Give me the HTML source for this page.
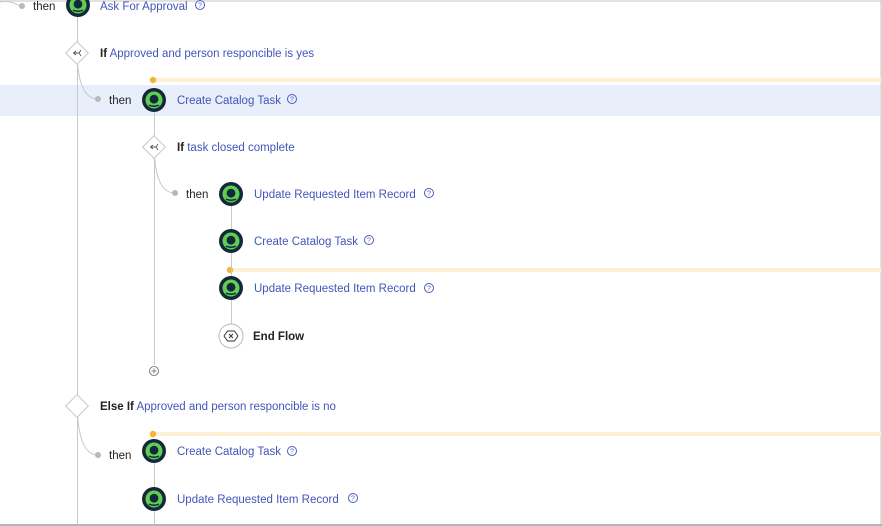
<!DOCTYPE html>
<html><head><meta charset="utf-8"><style>
html,body{margin:0;padding:0;background:#fff;}
svg{display:block;font-family:"Liberation Sans",sans-serif;}
.l{fill:#4355b9;font-size:11.5px;}
.t{fill:#222;font-size:11.5px;}
.b{fill:#222;font-size:11.5px;font-weight:bold;}
.q{fill:none;stroke:#4a5cc0;stroke-width:1;}
</style></head><body>
<svg width="882" height="526" viewBox="0 0 882 526">
<defs>
<g id="ic">
<circle r="12" fill="#13283a"/>
<circle r="8.5" fill="#5fce52"/>
<circle cy="-0.8" r="4.4" fill="#13283a"/>
<path d="M-5 5.2 Q0 7.2 5 5.2" stroke="#13283a" stroke-width="1.5" fill="none"/>
</g>
<g id="qm"><circle r="4.5" class="q"/><text x="0" y="2.6" text-anchor="middle" font-size="7" fill="#4a5cc0">?</text></g>
<g id="dm"><rect x="-8" y="-8" width="16" height="16" transform="rotate(45)" fill="#fff" stroke="#c8c8c8"/></g>
<g id="br"><path d="M-3.5 0 H2 M2 0 L4 -3 M2 0 L4 3 M-1 -2 L-3.5 0 L-1 2" stroke="#555" fill="none" stroke-width="0.9"/></g>
</defs>
<rect x="0" y="0.5" width="881" height="1" fill="#c6c6c6"/>
<rect x="880.5" y="0" width="1.2" height="526" fill="#c6c6c6"/>
<rect x="0" y="524" width="882" height="2" fill="#b5b5b5"/>
<rect x="0" y="85" width="880" height="31" fill="#e9eefb"/>
<rect x="153" y="78" width="728" height="4" fill="#fdf0d4"/>
<circle cx="153" cy="80" r="3.2" fill="#f5b72f"/>
<rect x="230" y="268" width="651" height="4" fill="#fdf0d4"/>
<circle cx="230" cy="270" r="3.2" fill="#f5b72f"/>
<rect x="153" y="432" width="728" height="4" fill="#fdf0d4"/>
<circle cx="153" cy="434" r="3.2" fill="#f5b72f"/>
<g stroke="#c8c8c8" stroke-width="1" fill="none">
<line x1="77.5" y1="0" x2="77.5" y2="524"/>
<line x1="154.5" y1="100" x2="154.5" y2="365"/>
<line x1="231.5" y1="194" x2="231.5" y2="330"/>
<line x1="154.5" y1="451" x2="154.5" y2="524"/>
<path d="M0 2 Q10 0 20 6"/>
<path d="M77.5 62 Q80 99 98 99"/>
<path d="M154.5 156 Q157 193 175 193"/>
<path d="M77.5 414 Q80 455 98 455"/>
</g>
<g fill="#b9b9b9"><circle cx="22" cy="6" r="3"/><circle cx="98" cy="99" r="3"/><circle cx="175" cy="193" r="3"/><circle cx="98" cy="455" r="3"/></g>
<text class="t" x="33" y="10">then</text>
<text class="t" x="109" y="104">then</text>
<text class="t" x="186" y="198">then</text>
<text class="t" x="109" y="459">then</text>
<use href="#ic" x="78" y="5"/>
<use href="#ic" x="154" y="100"/>
<use href="#ic" x="231" y="194"/>
<use href="#ic" x="231" y="241"/>
<use href="#ic" x="231" y="288"/>
<use href="#ic" x="154" y="451"/>
<use href="#ic" x="154" y="499"/>
<circle cx="231" cy="336" r="12" fill="#fff" stroke="#bbb"/>
<path d="M227.5 331 H234.5 L238 336 L234.5 341 H227.5 L224 336 Z" fill="none" stroke="#333" stroke-width="1" stroke-linejoin="round"/>
<path d="M229 334 L233 338 M233 334 L229 338" stroke="#333" stroke-width="1"/>
<text class="b" x="253" y="340">End Flow</text>
<circle cx="154" cy="371" r="4.5" fill="#fff" stroke="#666" stroke-width="0.8"/>
<path d="M151.5 371 H156.5 M154 368.5 V373.5" stroke="#666" stroke-width="0.8"/>
<use href="#dm" x="77" y="53"/><use href="#br" x="77" y="53"/>
<use href="#dm" x="154" y="147"/><use href="#br" x="154" y="147"/>
<use href="#dm" x="77" y="406"/>
<text class="l" x="100" y="10">Ask For Approval</text><use href="#qm" x="200" y="5"/>
<text x="100" y="57" class="l"><tspan class="b">If</tspan> Approved and person responcible is yes</text>
<text class="l" x="177" y="104">Create Catalog Task</text><use href="#qm" x="292" y="99"/>
<text x="177" y="151" class="l"><tspan class="b">If</tspan> task closed complete</text>
<text class="l" x="254" y="198">Update Requested Item Record</text><use href="#qm" x="429" y="193"/>
<text class="l" x="254" y="245">Create Catalog Task</text><use href="#qm" x="369" y="240"/>
<text class="l" x="254" y="292">Update Requested Item Record</text><use href="#qm" x="429" y="288"/>
<text x="100" y="410" class="l"><tspan class="b">Else If</tspan> Approved and person responcible is no</text>
<text class="l" x="177" y="455">Create Catalog Task</text><use href="#qm" x="292" y="451"/>
<text class="l" x="177" y="503">Update Requested Item Record</text><use href="#qm" x="353" y="498"/>
</svg>
</body></html>
